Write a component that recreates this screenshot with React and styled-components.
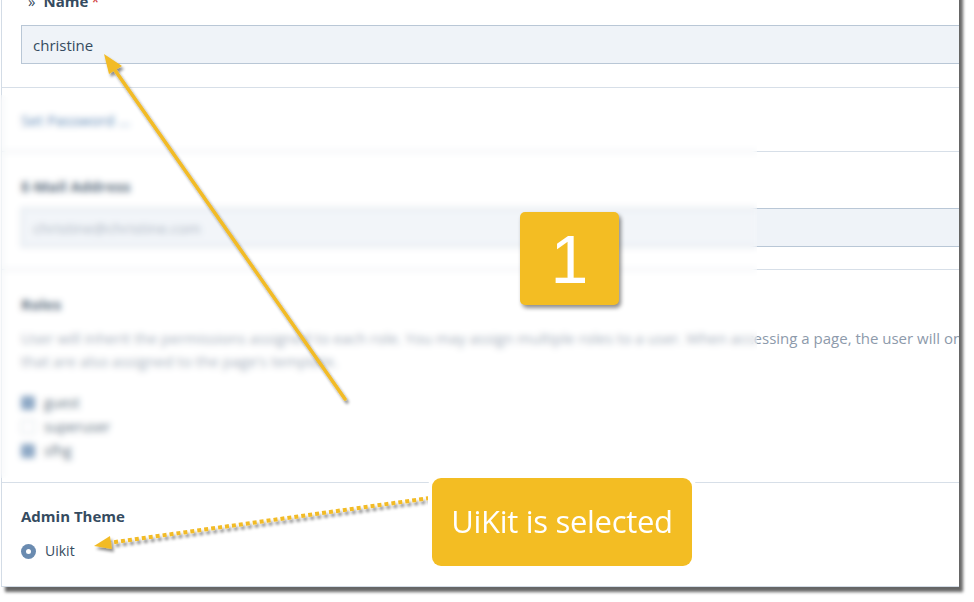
import React from 'react';
import styled, { createGlobalStyle } from 'styled-components';

const GlobalStyle = createGlobalStyle`
  html, body {
    margin: 0;
    padding: 0;
    background: #fff;
    overflow: hidden;
  }
  body {
    font-family: 'Open Sans', 'Noto Sans', sans-serif;
    color: #354b60;
  }
`;

const Page = styled.div`
  position: relative;
  width: 974px;
  height: 602px;
  overflow: hidden;
  background: #fff;
`;

const Panel = styled.div`
  margin: -31px 0 0 1px;
  width: 957px;
  overflow: hidden;
  background: #fff;
  border-left: 1px solid #d3dce6;
  border-bottom: 1px solid #d3dce6;
  box-shadow: 4px 5px 3px rgba(0, 0, 0, 0.6);
`;

const Section = styled.div`
  padding: ${(p) => p.pad || '24px 0 22px 19px'};
  border-top: ${(p) => (p.first ? 'none' : '1px solid #d7dfe8')};
  display: flex;
  flex-direction: column;
  gap: ${(p) => p.gap || '12px'};
`;

const Label = styled.div`
  font-size: 15px;
  font-weight: 700;
  line-height: 20px;
  color: #354b60;
  display: flex;
  align-items: center;
  gap: 8px;
  padding-left: ${(p) => (p.indent ? '7px' : '0')};
`;

const Chevron = styled.span`
  font-weight: 400;
  font-size: 15px;
`;

const Req = styled.span`
  color: #d03a3a;
  font-weight: 400;
  margin-left: -5px;
`;

const Input = styled.div`
  height: 37px;
  border: 1px solid #b9c7d6;
  border-right: none;
  background: #eff3f8;
  display: flex;
  align-items: center;
  padding-left: 11px;
  font-size: 15px;
  color: ${(p) => (p.muted ? '#9aa6b4' : '#354b60')};
`;

const Link = styled.a`
  font-size: 15px;
  color: #3a6fa7;
  line-height: 20px;
  text-decoration: none;
`;

const Desc = styled.p`
  margin: 0 0 7px;
  font-size: 15px;
  line-height: 23px;
  color: #8d9aab;
  white-space: nowrap;
`;

const OptionList = styled.div`
  display: flex;
  flex-direction: column;
  gap: 4px;
`;

const Option = styled.label`
  display: flex;
  align-items: center;
  gap: 9px;
  font-size: 14px;
  line-height: 20px;
  color: #354b60;
`;

const Check = styled.span`
  width: 14px;
  height: 14px;
  box-sizing: border-box;
  border: 1px solid ${(p) => (p.on ? '#6b8cb0' : '#c9d3de')};
  background: ${(p) => (p.on ? '#7193b8' : '#fff')};
  border-radius: 2px;
`;

const Radio = styled.span`
  width: 15px;
  height: 15px;
  border-radius: 50%;
  background: #6a8bb0;
  display: flex;
  align-items: center;
  justify-content: center;
  &::after {
    content: '';
    width: 5px;
    height: 5px;
    border-radius: 50%;
    background: #fff;
  }
`;

const BlurPane = styled.div`
  position: absolute;
  left: 0;
  top: 95px;
  width: 757px;
  height: 383px;
  backdrop-filter: blur(3px);
  background: rgba(255, 255, 255, 0.2);
  z-index: 1;
`;

const Annotations = styled.svg`
  position: absolute;
  left: 0;
  top: 0;
  z-index: 2;
  overflow: visible;
`;

const Badge = styled.div`
  position: absolute;
  left: 520px;
  top: 212px;
  width: 99px;
  height: 93px;
  background: #f3bd23;
  border-radius: 5px;
  box-shadow: 2px 3px 4px rgba(0, 0, 0, 0.45);
  color: #fff;
  font-family: 'Liberation Sans', Arial, sans-serif;
  font-size: 68px;
  display: flex;
  align-items: center;
  justify-content: center;
  z-index: 3;
`;

const Callout = styled.div`
  position: absolute;
  left: 432px;
  top: 478px;
  width: 260px;
  height: 88px;
  background: #f3bd23;
  border-radius: 9px;
  box-shadow: 0 0 0 4px #fff;
  color: #fff;
  font-family: 'Open Sans', sans-serif;
  font-size: 31px;
  letter-spacing: -0.3px;
  display: flex;
  align-items: center;
  justify-content: center;
  padding-bottom: 3px;
  box-sizing: border-box;
  z-index: 3;
`;

const App = () => {
  return (
    <Page>
      <GlobalStyle />
      <Panel>
        <Section first pad="22px 0 23px 19px" gap="14px">
          <Label indent>
            <Chevron>»</Chevron> Name <Req>*</Req>
          </Label>
          <Input>christine</Input>
        </Section>
        <Section pad="22px 0 21px 19px">
          <Link>Set Password ...</Link>
        </Section>
        <Section>
          <Label>E-Mail Address</Label>
          <Input muted>christine@christine.com</Input>
        </Section>
        <Section gap="13px" pad="24px 0 21px 19px">
          <Label>Roles</Label>
          <Desc>
            User will inherit the permissions assigned to each role. You may assign multiple roles to a user. When accessing a page, the user will only have access to the permissions
            <br />
            that are also assigned to the page's template.
          </Desc>
          <OptionList>
            <Option><Check on /> guest</Option>
            <Option><Check /> superuser</Option>
            <Option><Check on /> sfhg</Option>
          </OptionList>
        </Section>
        <Section gap="15px" pad="23px 0 25px 19px">
          <Label>Admin Theme</Label>
          <Option><Radio /> Uikit</Option>
        </Section>
      </Panel>

      <BlurPane />

      <Annotations width="974" height="602" viewBox="0 0 974 602">
        <defs>
          <filter id="sh" x="-20%" y="-20%" width="140%" height="140%">
            <feDropShadow dx="2" dy="3" stdDeviation="1.5" floodColor="#000" floodOpacity="0.45" />
          </filter>
        </defs>
        <g filter="url(#sh)">
          <line x1="345" y1="399" x2="112" y2="66" stroke="#f2bb26" strokeWidth="3.5" strokeLinecap="round" />
          <polygon points="104,54 122,66 109,74" fill="#f2bb26" />
        </g>
        <g filter="url(#sh)">
          <line x1="430" y1="498" x2="108" y2="543" stroke="#f2bb26" strokeWidth="4" strokeDasharray="4 3" />
          <polygon points="94,546 110,536 112,549" fill="#f2bb26" />
        </g>
      </Annotations>

      <Badge>1</Badge>
      <Callout>UiKit is selected</Callout>
    </Page>
  );
};

export default App;
